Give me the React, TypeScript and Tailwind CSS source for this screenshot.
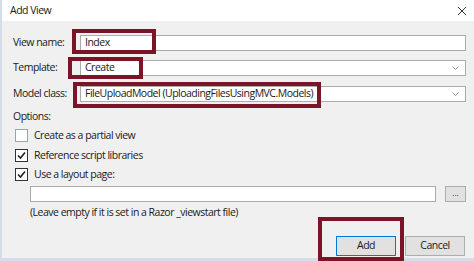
import React from "react";

const Check = () => (
  <svg width="9" height="9" viewBox="0 0 9 9" className="block">
    <path d="M1 4.5 L3.5 7 L8 1.5" fill="none" stroke="#222" strokeWidth="1.6" />
  </svg>
);

const Chevron = () => (
  <svg width="7" height="4" viewBox="0 0 7 4" className="block">
    <path d="M0.5 0.5 L3.5 3.5 L6.5 0.5" fill="none" stroke="#8a8a8a" strokeWidth="0.9" />
  </svg>
);

export default function App() {
  return (
    <div
      className="relative w-[474px] h-[261px] overflow-hidden bg-[#f0f0f0] text-[#1a1a1a] border-l-2 border-[#d4dde8] tracking-[-0.5px]"
      style={{ fontFamily: '"Open Sans", "Noto Sans", sans-serif' }}
    >
      <div className="absolute left-[-2px] top-[22px] w-[2px] h-[9px] bg-[#555]" />
      {/* title bar */}
      <div className="h-[21px] bg-white flex items-center justify-between pl-[8px] pr-[7px]">
        <span className="text-[10.5px] leading-none">Add View</span>
        <svg width="10" height="10" viewBox="0 0 10 10" className="block">
          <path d="M1 1 L9 9 M9 1 L1 9" stroke="#333" strokeWidth="1" />
        </svg>
      </div>

      <div className="pl-[11px] pr-[8px] pt-[14px] text-[10.5px]">
        {/* rows */}
        <div className="flex items-center h-[16px]">
          <div className="w-[67px]">View name:</div>
          <div className="flex-1 h-[16px] bg-white border border-[#ababab] flex items-center pl-[4px]">Index</div>
        </div>
        <div className="flex items-center h-[16px] mt-[9px]">
          <div className="w-[67px]">Template:</div>
          <div className="flex-1 h-[16px] bg-white border border-[#ababab] flex items-center pl-[4px] pr-[6px] justify-between">
            <span>Create</span>
            <Chevron />
          </div>
        </div>
        <div className="flex items-center h-[16px] mt-[10px]">
          <div className="w-[67px]">Model class:</div>
          <div className="flex-1 h-[16px] bg-white border border-[#ababab] flex items-center pl-[4px] pr-[6px] justify-between">
            <span>FileUploadModel (UploadingFilesUsingMVC.Models)</span>
            <Chevron />
          </div>
        </div>

        <div className="mt-[7px] h-[15px] flex items-center">Options:</div>

        <div className="pl-[2px]">
          <div className="flex items-center h-[13px] mt-[5px]">
            <div className="w-[13px] h-[13px] bg-white border border-[#8aa6c8] mr-[6px]" />
            <span>Create as a partial view</span>
          </div>
          <div className="flex items-center h-[13px] mt-[7px]">
            <div className="w-[13px] h-[13px] bg-white border border-[#333] mr-[6px] flex items-center justify-center">
              <Check />
            </div>
            <span>Reference script libraries</span>
          </div>
          <div className="flex items-center h-[13px] mt-[6px]">
            <div className="w-[13px] h-[13px] bg-white border border-[#333] mr-[6px] flex items-center justify-center">
              <Check />
            </div>
            <span>Use a layout page:</span>
          </div>
        </div>

        <div className="pl-[17px] mt-[5px]">
          <div className="flex items-center gap-[9px]">
            <div className="flex-1 h-[16px] bg-white border border-[#ababab]" />
            <div className="w-[21px] h-[16px] bg-[#e1e1e1] border border-[#adadad] flex items-center justify-center text-[8px] leading-none pb-[3px] tracking-normal">...</div>
          </div>
          <div className="mt-[3px] h-[15px] flex items-center">(Leave empty if it is set in a Razor _viewstart file)</div>
        </div>

        <div className="flex justify-end gap-[9px] mt-[16px] pr-[1px]">
          <div className="w-[60px] h-[20px] bg-[#e1e1e1] border border-[#0078d7] flex items-center justify-center">Add</div>
          <div className="w-[60px] h-[20px] bg-[#e1e1e1] border border-[#adadad] flex items-center justify-center">Cancel</div>
        </div>
      </div>

      <div className="absolute left-0 right-0 bottom-0 h-[3px] bg-[#d4dde8]" />

      {/* highlight boxes */}
      <div className="absolute left-[70px] top-[29px] w-[84px] h-[25px] border-[4px] border-[#7b1427]" />
      <div className="absolute left-[66px] top-[57px] w-[75px] h-[22px] border-[4px] border-[#7b1427]" />
      <div className="absolute left-[71px] top-[82px] w-[248px] h-[26px] border-[4px] border-[#7b1427]" />
      <div className="absolute left-[316px] top-[217px] w-[86px] h-[44px] border-[4px] border-[#7b1427]" />
    </div>
  );
}
